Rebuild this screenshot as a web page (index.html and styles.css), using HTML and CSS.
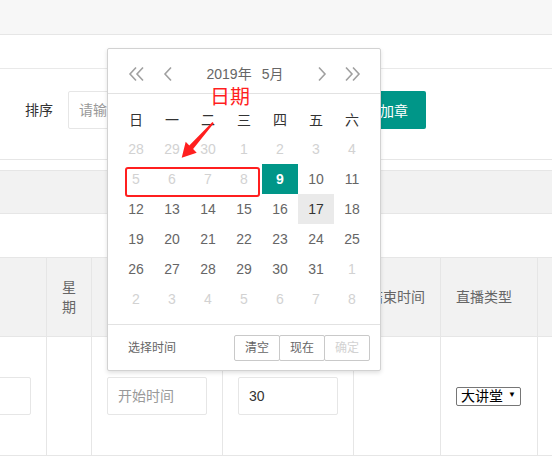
FILE: index.html
```html
<!DOCTYPE html>
<html lang="zh-CN">
<head>
<meta charset="utf-8">
<title>laydate</title>
<link rel="stylesheet" href="styles.css">
</head>
<body>
<div class="top"></div>
<div class="tabs"></div>
<div class="search">
  <span class="lbl">排序</span>
  <input class="inp" type="text" placeholder="请输入排序">
  <button class="btn">添加章</button>
</div>
<div class="band"></div>
<div class="tbl">
  <div class="th"></div>
  <div class="th">星期</div>
  <div class="th"></div>
  <div class="th"></div>
  <div class="th">结束时间</div>
  <div class="th">直播类型</div>
  <div class="th"></div>
  <div class="td"><input class="cinp wide" type="text"></div>
  <div class="td"></div>
  <div class="td"><input class="cinp" type="text" placeholder="开始时间"></div>
  <div class="td"><input class="cinp" type="text" value="30"></div>
  <div class="td"></div>
  <div class="td"><span class="sel">大讲堂<span class="caret">▼</span></span></div>
  <div class="td"></div>
</div>

<div class="laydate">
  <div class="ld-head">
    <svg class="ico dbl" viewBox="0 0 18 16"><path d="M8 1.5 L2 8 L8 14.5 M15 1.5 L9 8 L15 14.5"/></svg>
    <svg class="ico sgl gap-l" viewBox="0 0 10 16"><path d="M8 1.5 L2 8 L8 14.5"/></svg>
    <div class="ym"><span>2019年</span><span>5月</span></div>
    <svg class="ico sgl" viewBox="0 0 10 16"><path d="M2 1.5 L8 8 L2 14.5"/></svg>
    <svg class="ico dbl gap-r" viewBox="0 0 18 16"><path d="M3 1.5 L9 8 L3 14.5 M10 1.5 L16 8 L10 14.5"/></svg>
  </div>
  <div class="ld-content">
    <div class="wk">日</div><div class="wk">一</div><div class="wk">二</div><div class="wk">三</div><div class="wk">四</div><div class="wk">五</div><div class="wk">六</div>
    <div class="d off">28</div><div class="d off">29</div><div class="d off">30</div><div class="d off">1</div><div class="d off">2</div><div class="d off">3</div><div class="d off">4</div>
    <div class="d off">5</div><div class="d off">6</div><div class="d off">7</div><div class="d off">8</div><div class="d on">9</div><div class="d">10</div><div class="d">11</div>
    <div class="d">12</div><div class="d">13</div><div class="d">14</div><div class="d">15</div><div class="d">16</div><div class="d hov">17</div><div class="d">18</div>
    <div class="d">19</div><div class="d">20</div><div class="d">21</div><div class="d">22</div><div class="d">23</div><div class="d">24</div><div class="d">25</div>
    <div class="d">26</div><div class="d">27</div><div class="d">28</div><div class="d">29</div><div class="d">30</div><div class="d">31</div><div class="d off">1</div>
    <div class="d off">2</div><div class="d off">3</div><div class="d off">4</div><div class="d off">5</div><div class="d off">6</div><div class="d off">7</div><div class="d off">8</div>
  </div>
  <div class="ld-foot">
    <span class="seltime">选择时间</span>
    <div class="fbtns"><span class="fb">清空</span><span class="fb">现在</span><span class="fb dis">确定</span></div>
  </div>
</div>

<div class="note">日期</div>
<svg class="arrow" viewBox="0 0 552 461"><polygon points="212.4,122 213.8,123.2 193.1,148.9 196.7,152.7 181.7,157.7 185.7,141.7 189.3,145.5"/></svg>
<div class="redbox"></div>
</body>
</html>
```

FILE: styles.css
```css
* { box-sizing: border-box; }
html, body { margin: 0; padding: 0; }
body {
  width: 552px;
  height: 461px;
  overflow: hidden;
  position: relative;
  background: #fff;
  font-family: "Liberation Sans", Arial, "Noto Sans CJK SC", sans-serif;
  font-size: 14px;
  color: #666;
}
.top {
  height: 35px;
  background: #f7f7f7;
  border-bottom: 1px solid #e6e6e6;
}
.tabs {
  height: 34px;
  border-bottom: 1px solid #e9e9e9;
}
.search {
  height: 91px;
  border-bottom: 1px solid #e6e6e6;
  padding: 22px 0 0 25px;
  display: flex;
  align-items: flex-start;
}
.lbl {
  color: #333;
  line-height: 38px;
  width: 28px;
}
.inp {
  margin-left: 15px;
  width: 190px;
  height: 38px;
  border: 1px solid #e6e6e6;
  border-radius: 2px;
  padding: 0 10px;
  font: inherit;
  color: #333;
  outline: none;
}
.inp::placeholder, .cinp::placeholder { color: #999; }
.btn {
  margin-left: 90px;
  height: 38px;
  padding: 0 18px;
  border: none;
  border-radius: 2px;
  background: #009688;
  color: #fff;
  font: inherit;
  white-space: nowrap;
}
.band {
  margin-top: 10px;
  height: 44px;
  background: #f2f2f2;
  border-top: 1px solid #e6e6e6;
  border-bottom: 1px solid #e6e6e6;
}
.tbl {
  margin-top: 43px;
  margin-left: -80px;
  display: grid;
  grid-template-columns: 127px 45px 131px 131px 87px 97px 120px;
  grid-template-rows: 79px 119px;
  border-top: 1px solid #e6e6e6;
}
.th, .td {
  border-right: 1px solid #e6e6e6;
  border-bottom: 1px solid #e6e6e6;
  padding: 0 15px;
  display: flex;
  align-items: center;
  line-height: 20px;
  overflow: hidden;
}
.th { background: #f2f2f2; color: #666; }
.cinp {
  width: 100px;
  height: 38px;
  border: 1px solid #e6e6e6;
  border-radius: 2px;
  padding: 0 10px;
  font: inherit;
  color: #333;
  outline: none;
  flex: none;
}
.cinp.wide { width: 96px; }
.sel {
  display: inline-flex;
  align-items: center;
  height: 19px;
  border: 1px solid #767676;
  border-radius: 2px;
  padding: 0 4px 0 4px;
  color: #000;
  font-size: 14px;
  line-height: 17px;
  white-space: nowrap;
}
.caret {
  font-size: 8px;
  margin-left: 5px;
  margin-top: -4px;
}

/* laydate popup */
.laydate {
  position: absolute;
  left: 107px;
  top: 48px;
  width: 274px;
  background: #fff;
  border: 1px solid #d2d2d2;
  border-radius: 2px;
  box-shadow: 0 2px 4px rgba(0,0,0,.12);
  z-index: 10;
}
.ld-head {
  display: flex;
  align-items: center;
  height: 45px;
  padding: 10px 19px 5px 20px;
  border-bottom: 1px solid #e2e2e2;
}
.ico {
  height: 16px;
  fill: none;
  stroke: #a0a0a0;
  stroke-width: 1.6;
  flex: none;
}
.ico.dbl { width: 18px; }
.ico.sgl { width: 10px; }
.gap-l { margin-left: 17px; }
.gap-r { margin-left: 16px; }
.ym {
  flex: 1;
  display: flex;
  justify-content: center;
  gap: 10px;
  color: #666;
  line-height: 30px;
}
.ld-content {
  padding: 10px;
  display: grid;
  grid-template-columns: repeat(7, 36px);
  grid-auto-rows: 30px;
}
.wk, .d {
  display: flex;
  align-items: center;
  justify-content: center;
}
.wk { color: #333; }
.d { color: #666; }
.d.off { color: #d2d2d2; }
.d.on { background: #009688; color: #fff; font-weight: bold; }
.d.hov { background: #eaeaea; color: #333; }
.ld-foot {
  height: 46px;
  border-top: 1px solid #e2e2e2;
  padding: 10px 10px 0 20px;
  display: flex;
  justify-content: space-between;
  align-items: flex-start;
  font-size: 12px;
}
.seltime { line-height: 26px; color: #666; }
.fbtns { display: flex; }
.fb {
  height: 26px;
  line-height: 24px;
  padding: 0 10px;
  border: 1px solid #c9c9c9;
  border-radius: 2px;
  margin-left: -1px;
  color: #666;
  background: #fff;
}
.fb.dis { color: #d2d2d2; }

/* annotation overlay */
.note {
  position: absolute;
  left: 210px;
  top: 86px;
  font-size: 20px;
  line-height: 22px;
  color: #ff1f1f;
  z-index: 20;
}
.arrow {
  position: absolute;
  left: 0;
  top: 0;
  width: 552px;
  height: 461px;
  fill: #ff1f1f;
  z-index: 20;
  pointer-events: none;
}
.redbox {
  position: absolute;
  left: 125px;
  top: 167px;
  width: 135px;
  height: 30px;
  border: 2px solid #ff1f1f;
  border-radius: 3px;
  z-index: 20;
}
```
